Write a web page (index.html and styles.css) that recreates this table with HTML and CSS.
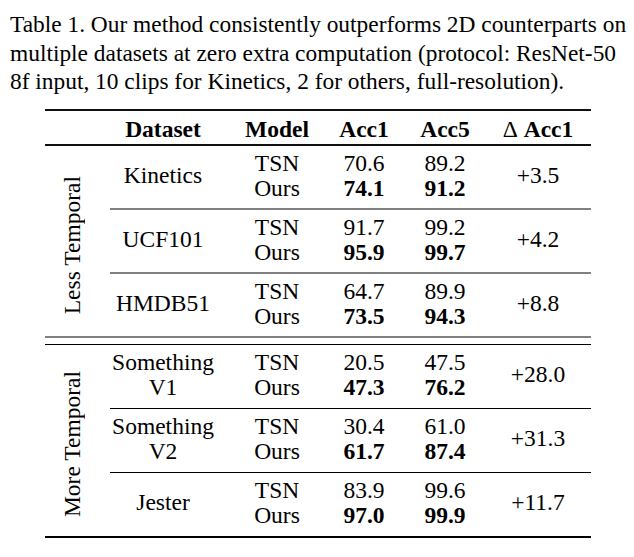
FILE: index.html
```html
<!DOCTYPE html>
<html lang="en">
<head>
<meta charset="utf-8">
<title>Table 1</title>
<link rel="stylesheet" href="styles.css">
</head>
<body>
<figure class="table-figure">
  <p class="caption">Table 1. Our method consistently outperforms 2D counterparts on<br>multiple datasets at zero extra computation (protocol: ResNet-50<br>8f input, 10 clips for Kinetics, 2 for others, full-resolution).</p>
  <table class="results">
    <colgroup>
      <col class="w-group">
      <col class="w-data">
      <col class="w-model">
      <col class="w-acc1">
      <col class="w-acc5">
      <col class="w-delta">
    </colgroup>
    <thead>
      <tr>
        <th class="c-group"></th>
        <th class="c-data">Dataset</th>
        <th class="c-model">Model</th>
        <th class="c-acc1">Acc1</th>
        <th class="c-acc5">Acc5</th>
        <th class="c-delta"><span class="math">&Delta;</span> Acc1</th>
      </tr>
    </thead>
    <tbody class="less">
      <tr>
        <td class="c-group" rowspan="3"><span class="vlabel">Less Temporal</span></td>
        <td class="c-data">Kinetics</td>
        <td class="c-model">TSN<br>Ours</td>
        <td class="c-acc1">70.6<br><b>74.1</b></td>
        <td class="c-acc5">89.2<br><b>91.2</b></td>
        <td class="c-delta">+3.5</td>
      </tr>
      <tr>
        <td class="c-data">UCF101</td>
        <td class="c-model">TSN<br>Ours</td>
        <td class="c-acc1">91.7<br><b>95.9</b></td>
        <td class="c-acc5">99.2<br><b>99.7</b></td>
        <td class="c-delta">+4.2</td>
      </tr>
      <tr>
        <td class="c-data">HMDB51</td>
        <td class="c-model">TSN<br>Ours</td>
        <td class="c-acc1">64.7<br><b>73.5</b></td>
        <td class="c-acc5">89.9<br><b>94.3</b></td>
        <td class="c-delta">+8.8</td>
      </tr>
    </tbody>
    <tbody>
      <tr class="gap"><td colspan="6"></td></tr>
    </tbody>
    <tbody class="more">
      <tr>
        <td class="c-group" rowspan="3"><span class="vlabel">More Temporal</span></td>
        <td class="c-data">Something<br>V1</td>
        <td class="c-model">TSN<br>Ours</td>
        <td class="c-acc1">20.5<br><b>47.3</b></td>
        <td class="c-acc5">47.5<br><b>76.2</b></td>
        <td class="c-delta">+28.0</td>
      </tr>
      <tr>
        <td class="c-data">Something<br>V2</td>
        <td class="c-model">TSN<br>Ours</td>
        <td class="c-acc1">30.4<br><b>61.7</b></td>
        <td class="c-acc5">61.0<br><b>87.4</b></td>
        <td class="c-delta">+31.3</td>
      </tr>
      <tr class="last">
        <td class="c-data">Jester</td>
        <td class="c-model">TSN<br>Ours</td>
        <td class="c-acc1">83.9<br><b>97.0</b></td>
        <td class="c-acc5">99.6<br><b>99.9</b></td>
        <td class="c-delta">+11.7</td>
      </tr>
    </tbody>
  </table>
</figure>
</body>
</html>
```

FILE: styles.css
```css
html, body {
  margin: 0;
  padding: 0;
  background: #ffffff;
}

body {
  font-family: "Liberation Serif", "Times New Roman", serif;
  color: #000000;
}

.table-figure {
  margin: 0;
  padding: 10px 0 0 0;
}

.caption {
  margin: 0 0 13px 10px;
  font-size: 23.4px;
  line-height: 28.5px;
  white-space: nowrap;
}

.results {
  margin-left: 45px;
  width: 546px;
  table-layout: fixed;
  border-collapse: separate;
  border-spacing: 0;
  font-size: 23.5px;
  line-height: 25px;
}

.w-group { width: 65px; }
.w-data  { width: 110px; }
.w-model { width: 100px; }
.w-acc1  { width: 85px; }
.w-acc5  { width: 86px; }
.w-delta { width: 100px; }

.results th,
.results td {
  text-align: center;
  vertical-align: middle;
  padding: 0;
  white-space: nowrap;
}

.results th {
  font-weight: bold;
  padding-top: 6px;
  padding-bottom: 2px;
  border-top: 2px solid #111111;
  border-bottom: 2px solid #111111;
}

.math {
  font-weight: normal;
}

.results td {
  padding-top: 5px;
  padding-bottom: 7px;
}

.results .c-data  { padding-right: 4px; }
.results .c-model { padding-left: 14px; }
.results .c-acc1  { padding-left: 3px; }
.results .c-acc5  { padding-right: 6px; }
.results .c-delta { padding-right: 6px; }

.less td {
  border-bottom: 2px solid #808080;
}

.more td {
  border-bottom: 1px solid #000000;
  padding-bottom: 8px;
}

.more .last td,
.more td.c-group {
  border-bottom: 2px solid #000000;
}

.results td.c-group {
  padding: 14px 11px 0 0;
}

.results .gap td {
  height: 6px;
  padding: 0;
  border-bottom: 1px solid #000000;
}

.vlabel {
  display: inline-block;
  writing-mode: vertical-rl;
  text-orientation: sideways;
  transform: rotate(180deg);
  line-height: 25px;
}
```
